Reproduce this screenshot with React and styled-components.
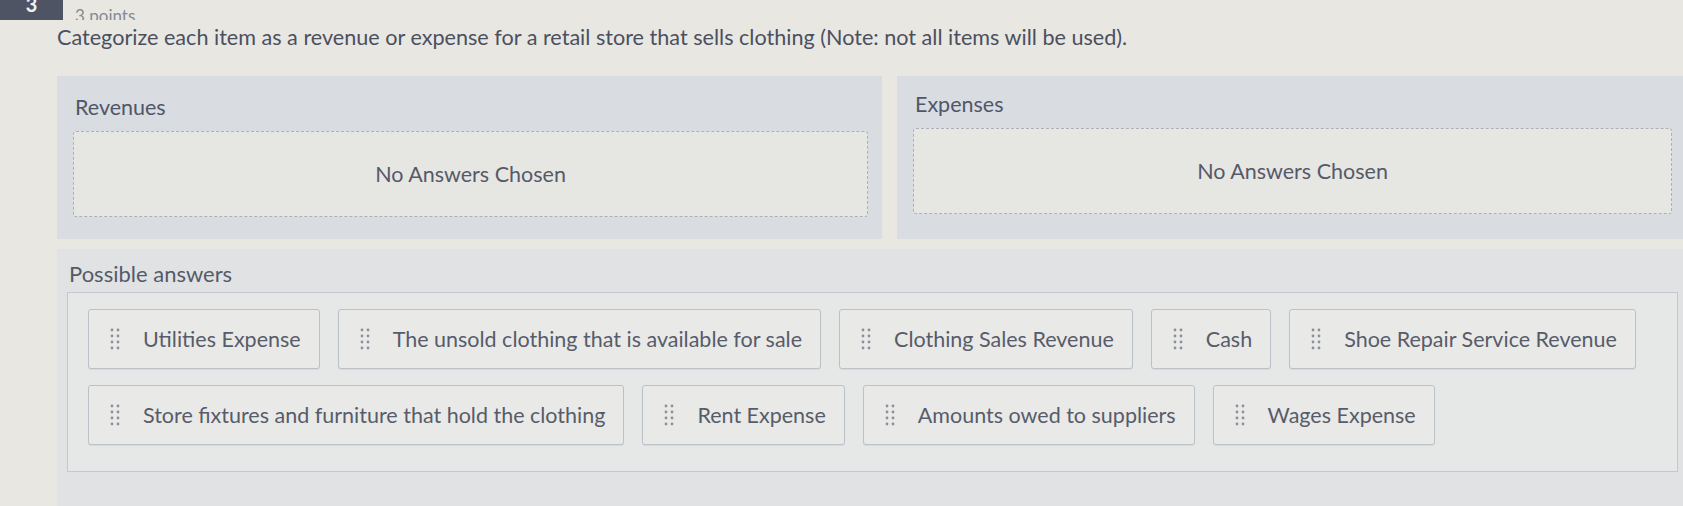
import React from "react";
import styled, { createGlobalStyle } from "styled-components";

const Global = createGlobalStyle`
  html, body {
    margin: 0;
    padding: 0;
    background: #e8e7e2;
  }
  body {
    font-family: Lato, "Open Sans", sans-serif;
    color: #4d5261;
    overflow: hidden;
  }
`;

const answers = [
  ["Utilities Expense", "The unsold clothing that is available for sale", "Clothing Sales Revenue", "Cash", "Shoe Repair Service Revenue"],
  ["Store fixtures and furniture that hold the clothing", "Rent Expense", "Amounts owed to suppliers", "Wages Expense"],
];

const Handle = () => (
  <svg width="10" height="22" viewBox="0 0 10 22">
    {[2, 8, 14, 20].map((y) =>
      [2, 8].map((x) => <circle key={`${x}-${y}`} cx={x} cy={y} r="1.4" fill="#8b909a" />)
    )}
  </svg>
);

const App = () => {
  return (
    <Page>
      <Global />
      <TopBar>
        <Badge>3</Badge>
        <Points>3 points</Points>
      </TopBar>
      <Question>
        Categorize each item as a revenue or expense for a retail store that sells clothing (Note: not all items will be used).
      </Question>
      <Categories>
        <Panel>
          <PanelTitle>Revenues</PanelTitle>
          <DropZone>No Answers Chosen</DropZone>
        </Panel>
        <Panel $right>
          <PanelTitle>Expenses</PanelTitle>
          <DropZone>No Answers Chosen</DropZone>
        </Panel>
      </Categories>
      <Possible>
        <PossibleTitle>Possible answers</PossibleTitle>
        <AnswerBox>
          {answers.map((row, i) => (
            <Row key={i}>
              {row.map((a) => (
                <Chip key={a}>
                  <Handle />
                  <span>{a}</span>
                </Chip>
              ))}
            </Row>
          ))}
        </AnswerBox>
      </Possible>
    </Page>
  );
};

const Page = styled.div`
  width: 1683px;
  height: 506px;
  display: flex;
  flex-direction: column;
`;

const TopBar = styled.div`
  height: 20px;
  display: flex;
  align-items: flex-end;
  overflow: hidden;
  gap: 12px;
`;

const Badge = styled.div`
  width: 63px;
  height: 20px;
  background: #4f5464;
  color: #f2f2f2;
  font-size: 20px;
  font-weight: 700;
  display: flex;
  justify-content: center;
  align-items: flex-end;
  line-height: 20px;
  overflow: hidden;
  padding-bottom: 6px;
  box-sizing: border-box;
`;

const Points = styled.div`
  font-size: 17px;
  color: #868a93;
  line-height: 20px;
  margin-bottom: -6px;
`;

const Question = styled.div`
  margin: 4px 0 0 57px;
  font-size: 21.6px;
  line-height: 26px;
  color: #4b5060;
`;

const Categories = styled.div`
  margin: 26px 0 0 57px;
  display: grid;
  grid-template-columns: 825px 1fr;
  gap: 15px;
`;

const Panel = styled.div`
  background: #d9dce1;
  padding: ${(p) => (p.$right ? "16px 11px 24px 16px" : "19px 14px 24px 16px")};
  height: 163px;
  box-sizing: border-box;
`;

const PanelTitle = styled.div`
  font-size: 21.5px;
  line-height: 24px;
  color: #50566a;
  margin: 0 0 12px 2px;
`;

const DropZone = styled.div`
  height: 86px;
  border: 1.5px dashed #aab0b9;
  background: #e6e6e3;
  border-radius: 3px;
  display: flex;
  align-items: center;
  justify-content: center;
  font-size: 21.5px;
  color: #555a68;
  box-sizing: border-box;
`;

const Possible = styled.div`
  flex: 1;
  margin: 10px 0 0 57px;
  background: #e1e2e3;
  padding: 13px 5px 0 10px;
`;

const PossibleTitle = styled.div`
  font-size: 22px;
  line-height: 24px;
  color: #555a69;
  margin-left: 2px;
`;

const AnswerBox = styled.div`
  margin-top: 6px;
  border: 1.5px solid #c3c8cf;
  background: #e6e7e7;
  padding: 16px 20px 26px;
  display: flex;
  flex-direction: column;
  gap: 16px;
`;

const Row = styled.div`
  display: flex;
  gap: 18px;
`;

const Chip = styled.div`
  display: flex;
  align-items: center;
  gap: 23px;
  height: 60px;
  box-sizing: border-box;
  padding: 0 18px 0 21px;
  background: #e9e9e8;
  border: 1.5px solid #bcc1c8;
  border-radius: 3px;
  box-shadow: 0 1px 1px rgba(0, 0, 0, 0.06);
  font-size: 21.5px;
  color: #575c6a;
  white-space: nowrap;
`;

export default App;
